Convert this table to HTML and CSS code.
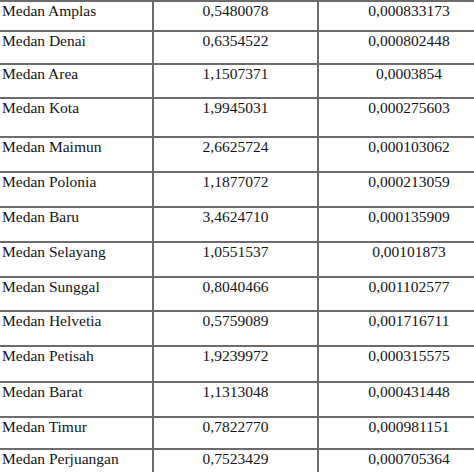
FILE: index.html
```html
<!DOCTYPE html>
<html lang="id">
<head>
<meta charset="utf-8">
<title>Tabel Kecamatan</title>
<link rel="stylesheet" href="styles.css">
</head>
<body>
<div class="table">
  <div class="row"><div class="cell name">Medan Amplas</div><div class="cell num">0,5480078</div><div class="cell val">0,000833173</div></div>
  <div class="row"><div class="cell name">Medan Denai</div><div class="cell num">0,6354522</div><div class="cell val">0,000802448</div></div>
  <div class="row"><div class="cell name">Medan Area</div><div class="cell num">1,1507371</div><div class="cell val">0,0003854</div></div>
  <div class="row"><div class="cell name">Medan Kota</div><div class="cell num">1,9945031</div><div class="cell val">0,000275603</div></div>
  <div class="row"><div class="cell name">Medan Maimun</div><div class="cell num">2,6625724</div><div class="cell val">0,000103062</div></div>
  <div class="row"><div class="cell name">Medan Polonia</div><div class="cell num">1,1877072</div><div class="cell val">0,000213059</div></div>
  <div class="row"><div class="cell name">Medan Baru</div><div class="cell num">3,4624710</div><div class="cell val">0,000135909</div></div>
  <div class="row"><div class="cell name">Medan Selayang</div><div class="cell num">1,0551537</div><div class="cell val">0,00101873</div></div>
  <div class="row"><div class="cell name">Medan Sunggal</div><div class="cell num">0,8040466</div><div class="cell val">0,001102577</div></div>
  <div class="row"><div class="cell name">Medan Helvetia</div><div class="cell num">0,5759089</div><div class="cell val">0,001716711</div></div>
  <div class="row"><div class="cell name">Medan Petisah</div><div class="cell num">1,9239972</div><div class="cell val">0,000315575</div></div>
  <div class="row"><div class="cell name">Medan Barat</div><div class="cell num">1,1313048</div><div class="cell val">0,000431448</div></div>
  <div class="row"><div class="cell name">Medan Timur</div><div class="cell num">0,7822770</div><div class="cell val">0,000981151</div></div>
  <div class="row"><div class="cell name">Medan Perjuangan</div><div class="cell num">0,7523429</div><div class="cell val">0,000705364</div></div>
</div>
</body>
</html>
```

FILE: styles.css
```css
html, body {
  margin: 0;
  padding: 0;
  background: #ffffff;
  overflow: hidden;
}

body {
  width: 474px;
  height: 474px;
  font-family: "Liberation Serif", "Times New Roman", serif;
  color: #141414;
}

.table {
  display: flex;
  flex-direction: column;
  width: 474px;
}

.row {
  display: flex;
  box-sizing: border-box;
  height: 35px;
  border-top: 2px solid #6c6c6c;
}

.row:nth-child(1) { height: 30px; }
.row:nth-child(2) { height: 33px; }
.row:nth-child(3) { height: 34px; }
.row:nth-child(4) { height: 39px; }
.row:nth-child(9) { height: 34px; }
.row:nth-child(11) { height: 36px; }
.row:nth-child(13) { height: 32px; }
.row:nth-child(14) { height: 24px; }

.cell {
  box-sizing: border-box;
  line-height: 17px;
  white-space: nowrap;
}

.name {
  width: 154px;
  padding-left: 2px;
  font-size: 15.5px;
  border-right: 2px solid #6c6c6c;
}

.num {
  width: 165px;
  text-align: center;
  font-size: 15.5px;
  border-right: 2px solid #6c6c6c;
}

.val {
  flex: 1;
  padding-left: 25px;
  text-align: center;
  font-size: 15.5px;
}
```
